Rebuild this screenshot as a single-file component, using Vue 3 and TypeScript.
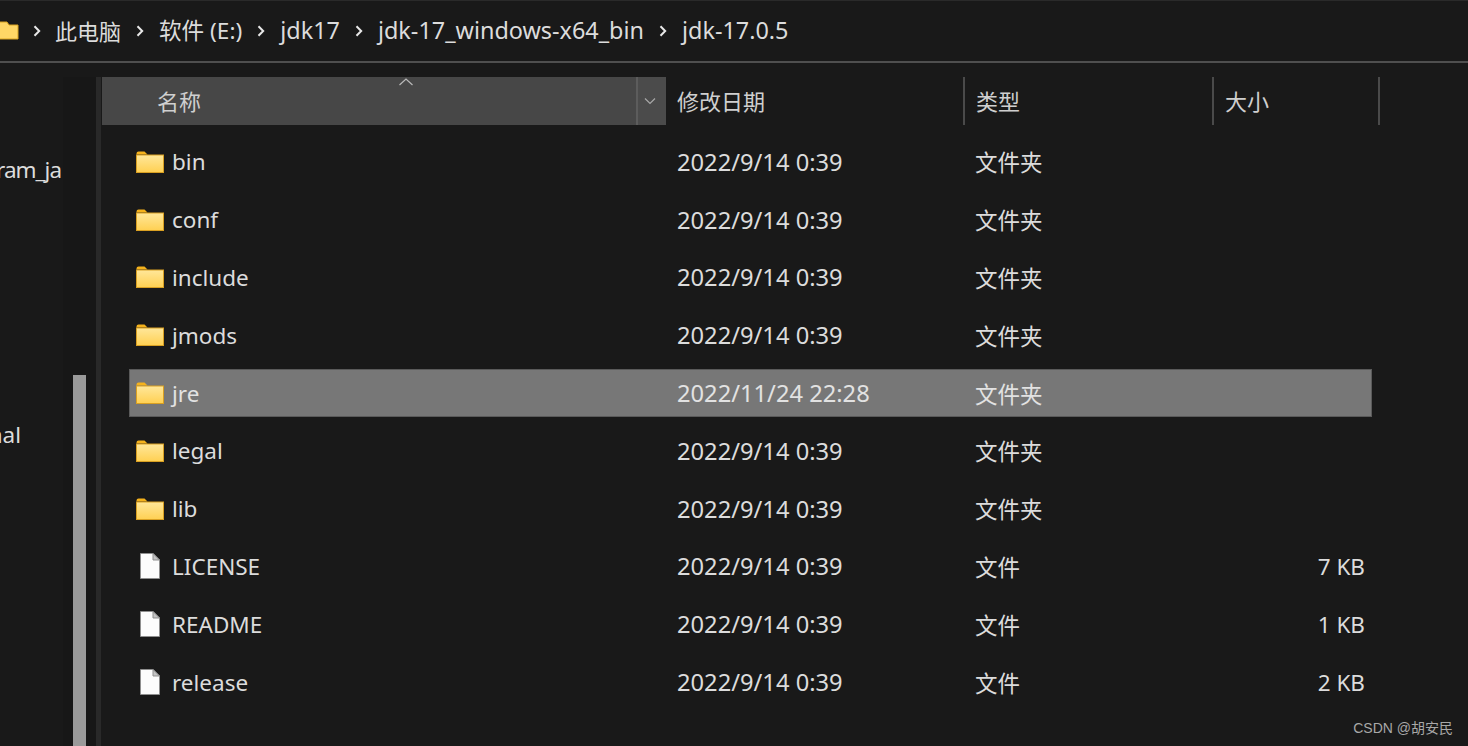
<script setup lang="ts">
interface Item { name: string; date: string; type: string; size: string; kind: 'folder' | 'file'; selected?: boolean }
const d = '2022/9/14 0:39'
const items: Item[] = [
  { name: 'bin', date: d, type: '文件夹', size: '', kind: 'folder' },
  { name: 'conf', date: d, type: '文件夹', size: '', kind: 'folder' },
  { name: 'include', date: d, type: '文件夹', size: '', kind: 'folder' },
  { name: 'jmods', date: d, type: '文件夹', size: '', kind: 'folder' },
  { name: 'jre', date: '2022/11/24 22:28', type: '文件夹', size: '', kind: 'folder', selected: true },
  { name: 'legal', date: d, type: '文件夹', size: '', kind: 'folder' },
  { name: 'lib', date: d, type: '文件夹', size: '', kind: 'folder' },
  { name: 'LICENSE', date: d, type: '文件', size: '7 KB', kind: 'file' },
  { name: 'README', date: d, type: '文件', size: '1 KB', kind: 'file' },
  { name: 'release', date: d, type: '文件', size: '2 KB', kind: 'file' },
]
const crumbs = ['此电脑', '软件 (E:)', 'jdk17', 'jdk-17_windows-x64_bin', 'jdk-17.0.5']
</script>

<template>
  <div class="page">
    <header class="bar">
      <svg class="bar-folder" width="20" height="20" viewBox="0 0 20 20">
        <path d="M0 2h8l2 3h9v14H0z" fill="#ffd766" stroke="#d9a321" stroke-width="1" />
      </svg>
      <template v-for="(c, i) in crumbs" :key="c">
        <svg class="sep" width="8" height="12" viewBox="0 0 8 12">
          <path d="M1.5 1.2L6.2 6l-4.7 4.8" fill="none" stroke="#e8e8e8" stroke-width="2" />
        </svg>
        <span class="crumb" :class="{ cjk: i === 0, mixed: i === 1 }">{{ c }}</span>
      </template>
    </header>
    <div class="body">
      <aside class="side">
        <span class="side-a">ram_ja</span>
        <span class="side-b">nal</span>
        <div class="scroll"></div>
      </aside>
      <div class="rule"></div>
      <main class="main">
        <div class="head">
          <div class="h h-name">
            <span class="h-label">名称</span>
            <svg class="sort" width="16" height="8" viewBox="0 0 16 8">
              <path d="M1.5 7L8 1l6.5 6" fill="none" stroke="#b9b9b9" stroke-width="1.2" />
            </svg>
            <span class="drop">
              <svg width="12" height="8" viewBox="0 0 12 8">
                <path d="M1 1.5l5 5 5-5" fill="none" stroke="#a8a8a8" stroke-width="1.2" />
              </svg>
            </span>
          </div>
          <div class="h h-date">修改日期</div>
          <div class="h h-type">类型</div>
          <div class="h h-size">大小</div>
        </div>
        <div class="rows">
          <div v-for="it in items" :key="it.name" class="row" :class="{ sel: it.selected }">
            <div class="c-name">
              <svg v-if="it.kind === 'folder'" class="ico" width="28" height="22" viewBox="0 0 28 22">
                <defs>
                  <linearGradient id="fg" x1="0" y1="0" x2="0" y2="1">
                    <stop offset="0" stop-color="#ffe79a" />
                    <stop offset="1" stop-color="#ffd052" />
                  </linearGradient>
                </defs>
                <path d="M.5 2.5Q.5 .5 2.5 .5h6l3 3h-11z" fill="#f5b21c" />
                <rect x=".5" y="4" width="27" height="17.5" fill="url(#fg)" stroke="#d9a022" />
              </svg>
              <svg v-else class="ico" width="28" height="28" viewBox="0 0 28 28">
                <path d="M4.5 1.5h12.5l6.5 6.5v18.5h-19z" fill="#fcfcfc" stroke="#8f8f8f" />
                <path d="M17 1.5v6.5h6.5z" fill="#c4c4c4" stroke="#8f8f8f" />
              </svg>
              <span>{{ it.name }}</span>
            </div>
            <div class="c-date">{{ it.date }}</div>
            <div class="c-type">{{ it.type }}</div>
            <div class="c-size">{{ it.size }}</div>
          </div>
        </div>
      </main>
    </div>
    <div class="mark">CSDN @胡安民</div>
  </div>
</template>

<style>
html, body { margin: 0; background: #191919; }
</style>

<style scoped>
.page {
  position: relative;
  width: 1468px;
  height: 746px;
  overflow: hidden;
  background: #191919;
  color: #dcdcdc;
  font-family: "Noto Sans", "Noto Sans CJK SC", sans-serif;
  font-size: 22.5px;
  display: flex;
  flex-direction: column;
}
.bar {
  flex: none;
  box-sizing: border-box;
  height: 63px;
  padding-bottom: 3px;
  display: flex;
  align-items: center;
  border-top: 1px solid #2a2a2a;
  border-bottom: 2px solid #4f4f4f;
}
.bar-folder { margin-left: -1px; flex: none; }
.sep { margin: 2px 15px 0 15px; flex: none; }
.bar-folder + .sep { margin: 2px 14px 0 14px; }
.crumb { white-space: nowrap; font-size: 23.4px; }
.crumb.cjk { font-size: 22px; }
.crumb.mixed { font-size: 22.6px; }
.body { flex: 1; display: flex; min-height: 0; }
.side {
  width: 96px;
  flex: none;
  position: relative;
  overflow: hidden;
}
.side::after {
  content: "";
  position: absolute;
  left: 63px;
  right: 0;
  top: 14px;
  bottom: 0;
  background: #171717;
}
.side-a, .side-b { position: absolute; white-space: nowrap; line-height: 32px; }
.side-a { top: 91px; right: 35px; letter-spacing: -1px; }
.side-b { top: 356px; right: 75px; }
.scroll { position: absolute; left: 73px; top: 312px; bottom: 0; width: 13px; background: #9a9a9a; z-index: 1; }
.rule { width: 5px; flex: none; margin-top: 14px; background: #292929; }
.main { flex: 1; padding: 14px 0 0 1px; min-width: 0; }
.head { display: flex; height: 48px; font-size: 22px; }
.h { box-sizing: border-box; display: flex; align-items: center; color: #cfcfcf; padding-bottom: 3px; }
.h-name { width: 564px; background: #474747; position: relative; padding: 0 0 0 55px; }
.h-label { flex: 1; padding-bottom: 3px; }
.sort { position: absolute; left: 296px; top: 1px; }
.drop {
  width: 30px;
  align-self: stretch;
  border-left: 2px solid #5c5c5c;
  background: #4b4b4b;
  box-sizing: border-box;
  display: flex;
  align-items: center;
  justify-content: center;
  padding-right: 4px;
}
.h-date { width: 299px; padding-left: 11px; border-right: 2px solid #4a4a4a; }
.h-type { width: 249px; padding-left: 11px; border-right: 2px solid #4a4a4a; }
.h-size { width: 166px; padding-left: 11px; border-right: 2px solid #4a4a4a; }
.rows { padding-top: 8px; margin-left: 27px; width: 1243px; }
.row {
  height: 57.8px;
  box-sizing: border-box;
  display: flex;
  align-items: center;
  position: relative;
  border: 5px solid transparent;
  border-width: 5px 0;
  background-clip: padding-box;
}
.row.sel { background-color: #777; color: #e2e2e2; box-shadow: inset 0 0 0 1px #5a5a5a; }
.c-name { width: 537px; display: flex; align-items: center; padding-left: 7px; box-sizing: border-box; }
.ico { flex: none; margin-right: 8px; }
.c-date { width: 298px; padding-left: 11px; box-sizing: border-box; font-size: 23.7px; }
.c-type { width: 249px; padding-left: 11px; box-sizing: border-box; }
.c-size { width: 152px; text-align: right; }
.mark {
  position: absolute;
  right: 15px;
  bottom: 9px;
  font-size: 14px;
  line-height: 18px;
  color: #a8a8a8;
  font-family: "Liberation Sans", "Noto Sans CJK SC", sans-serif;
}
</style>
